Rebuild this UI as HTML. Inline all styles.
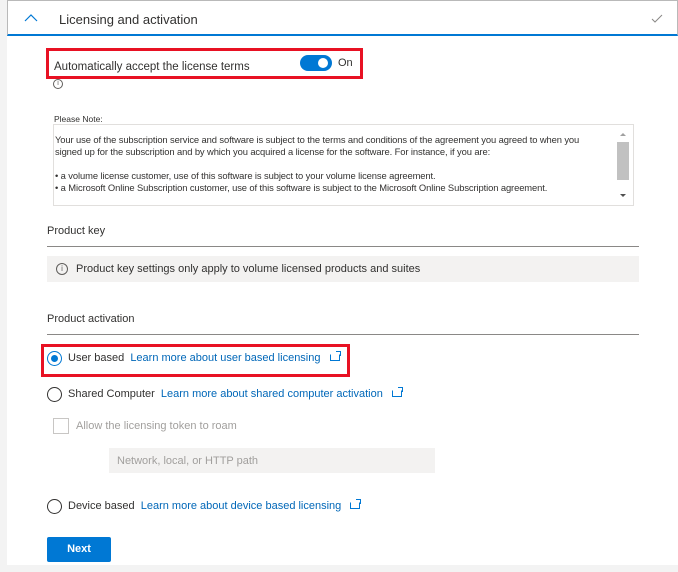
<!DOCTYPE html>
<html><head><style>
*{margin:0;padding:0;box-sizing:border-box}
body{width:678px;height:572px;background:#f3f3f3;font-family:"Liberation Sans",sans-serif;color:#323130;position:relative;overflow:hidden}
.a{position:absolute;white-space:nowrap}
.panel{position:absolute;left:7px;top:0;width:671px;height:565px;background:#fff}
.hdr{position:absolute;left:7px;top:0;width:671px;height:36px;border:1px solid #b9b9b9;border-bottom:2px solid #0078d4;background:#fff}
.red{position:absolute;border:3px solid #e81123}
.link{color:#0067b8}
.radio{position:absolute;width:15px;height:15px;border:1px solid #323130;border-radius:50%}
.ext{display:inline-block;width:10px;height:7px;border:1px solid #0078d4;border-top-color:transparent;margin-left:9px;position:relative;top:0px}
.ext:after{content:"";position:absolute;right:-2px;top:-4px;width:4px;height:4px;border-top:1px solid #0078d4;border-right:1px solid #0078d4}
</style></head><body>
<div class="panel"></div>
<div class="hdr"></div>
<svg class="a" style="left:24px;top:13px" width="14" height="9"><path d="M1 8 L7 2 L13 8" fill="none" stroke="#0078d4" stroke-width="1.2"/></svg>
<div class="a" style="left:59px;top:12px;font-size:13px;color:#323130">Licensing and activation</div>
<svg class="a" style="left:651px;top:14px" width="12" height="9"><path d="M1 5 L4 8 L11 1" fill="none" stroke="#8a8886" stroke-width="1"/></svg>

<div class="red" style="left:46px;top:48px;width:317px;height:31px"></div>
<div class="a" style="left:54px;top:61px;font-size:11.5px">Automatically accept the license terms</div>
<div class="a" style="left:300px;top:55px;width:32px;height:16px;border-radius:8px;background:#0078d4"></div>
<div class="a" style="left:318px;top:58px;width:10px;height:10px;border-radius:50%;background:#fff"></div>
<div class="a" style="left:338px;top:57px;font-size:11px">On</div>
<div class="a" style="left:53px;top:79px;width:10px;height:10px;border:1px solid #605e5c;border-radius:50%;font-size:7px;text-align:center;line-height:8px;color:#605e5c">i</div>

<div class="a" style="left:54px;top:114px;font-size:8.5px">Please Note:</div>
<div class="a" style="left:53px;top:124px;width:581px;height:82px;border:1px solid #e1dfdd"></div>
<div class="a" style="left:55px;top:134px;font-size:9.4px;line-height:12px;color:#323130;letter-spacing:-0.1px">Your use of the subscription service and software is subject to the terms and conditions of the agreement you agreed to when you<br>signed up for the subscription and by which you acquired a license for the software. For instance, if you are:<br><br>• a volume license customer, use of this software is subject to your volume license agreement.<br>• a Microsoft Online Subscription customer, use of this software is subject to the Microsoft Online Subscription agreement.</div>
<div class="a" style="left:617px;top:142px;width:12px;height:38px;background:#c1c1c1"></div>
<svg class="a" style="left:618px;top:130px" width="10" height="70"><path d="M2 6 L5 3 L8 6Z" fill="#a0a0a0"/><path d="M2 64 L5 67 L8 64Z" fill="#505050"/></svg>

<div class="a" style="left:47px;top:225px;font-size:11px">Product key</div>
<div class="a" style="left:47px;top:246px;width:592px;height:1px;background:#8a8886"></div>
<div class="a" style="left:47px;top:256px;width:592px;height:26px;background:#f3f2f1"></div>
<div class="a" style="left:56px;top:263px;width:12px;height:12px;border:1px solid #605e5c;border-radius:50%;font-size:8px;text-align:center;line-height:10px;color:#605e5c">i</div>
<div class="a" style="left:76px;top:263px;font-size:11px">Product key settings only apply to volume licensed products and suites</div>

<div class="a" style="left:47px;top:313px;font-size:11px">Product activation</div>
<div class="a" style="left:47px;top:334px;width:592px;height:1px;background:#8a8886"></div>

<div class="red" style="left:41px;top:344px;width:309px;height:33px"></div>
<div class="radio" style="left:47px;top:351px;border-color:#0078d4"></div>
<div class="a" style="left:51px;top:355px;width:7px;height:7px;border-radius:50%;background:#0078d4"></div>
<div class="a" style="left:68px;top:352px;font-size:11px">User based <span class="link" style="margin-left:3px">Learn more about user based licensing</span><span class="ext"></span></div>

<div class="radio" style="left:47px;top:387px"></div>
<div class="a" style="left:68px;top:388px;font-size:11px">Shared Computer <span class="link" style="margin-left:3px">Learn more about shared computer activation</span><span class="ext"></span></div>

<div class="a" style="left:53px;top:418px;width:16px;height:16px;border:1px solid #c8c6c4"></div>
<div class="a" style="left:76px;top:420px;font-size:11px;color:#a19f9d">Allow the licensing token to roam</div>
<div class="a" style="left:109px;top:448px;width:326px;height:25px;background:#f3f2f1"></div>
<div class="a" style="left:117px;top:455px;font-size:11px;color:#a19f9d">Network, local, or HTTP path</div>

<div class="radio" style="left:47px;top:499px"></div>
<div class="a" style="left:68px;top:500px;font-size:11px">Device based <span class="link" style="margin-left:3px">Learn more about device based licensing</span><span class="ext"></span></div>

<div class="a" style="left:47px;top:537px;width:64px;height:25px;background:#0078d4;border-radius:2px;color:#fff;font-size:11px;font-weight:bold;text-align:center;line-height:25px">Next</div>
</body></html>
